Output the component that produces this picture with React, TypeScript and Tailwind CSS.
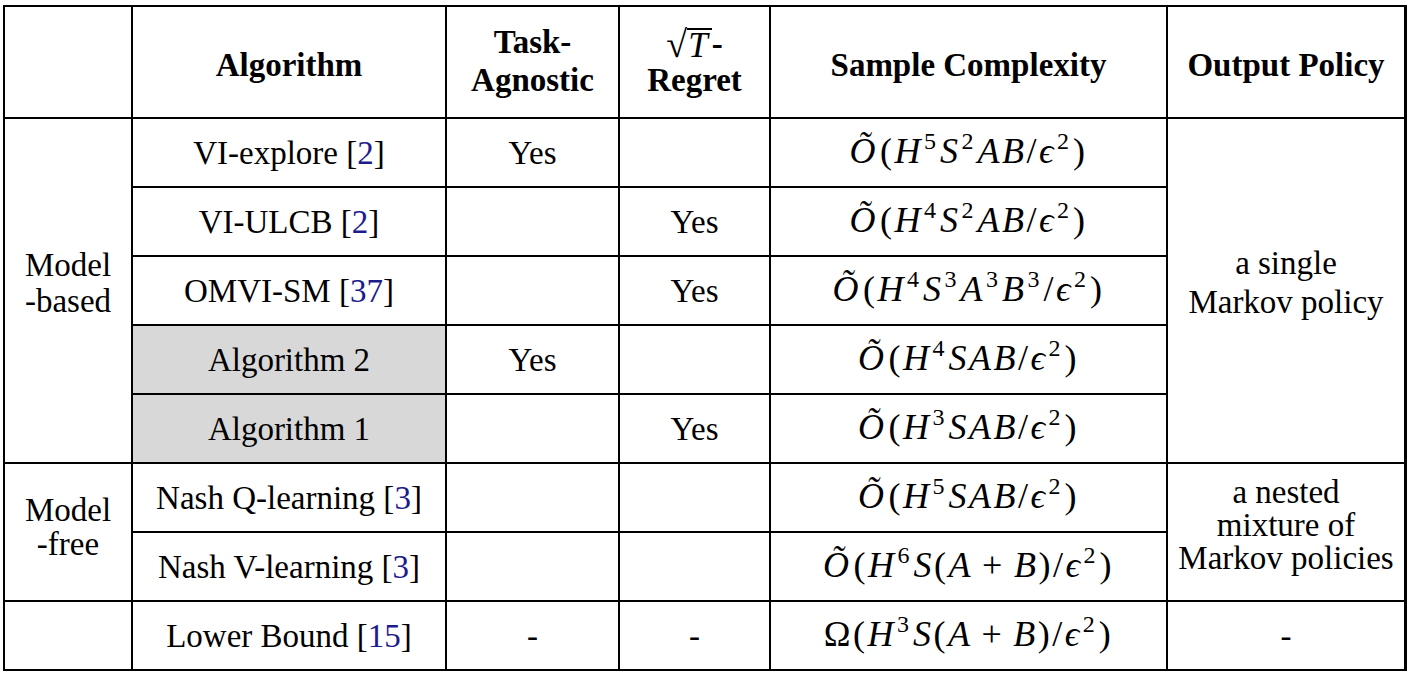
import React from "react";

const Cite = ({ n }: { n: string }) => <span className="text-[#1c1c8c]">{n}</span>;

const Sup = ({ c }: { c: string }) => (
  <span className="relative top-[-14px] text-[24px] not-italic tracking-normal ml-[1px] mr-[4px]">{c}</span>
);

const OT = () => <span className="italic mr-[2px]">Õ</span>;
const I = ({ c }: { c: string }) => <span className="italic">{c}</span>;
const Eps = () => <span className="italic">ϵ</span>;
const Plus = () => <span className="mx-[9px]">+</span>;

const Math = ({ children }: { children: React.ReactNode }) => (
  <span className="text-[36px] tracking-[2.5px] whitespace-nowrap">{children}</span>
);

const base = "flex items-center justify-center text-center";
const cell = `bg-white ${base}`;
const gray = `bg-[#d8d8d8] ${base}`;

export default function App() {
  return (
    <div className="w-[1411px] h-[674px] bg-white pl-[3px] pt-[5px] font-['Liberation_Serif',serif] text-[33px] text-black leading-[36px]">
      <div className="grid w-[1404px] bg-black p-[2px] gap-[2px] grid-cols-[126px_312px_171px_149px_395px_236px] grid-rows-[110px_repeat(8,67px)]">
        {/* header */}
        <div className={cell}></div>
        <div className={`${cell} font-bold pt-[6px]`}>Algorithm</div>
        <div className={`${cell} flex-col font-bold leading-[38px] pb-[2px]`}>
          <div>Task-</div>
          <div>Agnostic</div>
        </div>
        <div className={`${cell} flex-col font-bold leading-[38px] pb-[2px]`}>
          <div className="flex items-end h-[38px]">
            <span className="font-normal text-[38px] leading-[36px] translate-y-[1px]">√</span>
            <span className="border-t-[2px] border-black leading-[31px] text-[35px] font-normal italic pr-[4px] pl-[1px]">T</span>
            <span className="leading-[34px]">-</span>
          </div>
          <div>Regret</div>
        </div>
        <div className={`${cell} font-bold pt-[6px]`}>Sample Complexity</div>
        <div className={`${cell} font-bold pt-[6px]`}>Output Policy</div>

        {/* Model-based group */}
        <div className={`${cell} flex-col row-span-5 leading-[36px] pb-[16px]`}>
          <div>Model</div>
          <div>-based</div>
        </div>
        <div className={cell}>
          VI-explore [<Cite n="2" />]
        </div>
        <div className={cell}>Yes</div>
        <div className={cell}></div>
        <div className={cell}>
          <Math>
            <OT />(<I c="H" />
            <Sup c="5" />
            <I c="S" />
            <Sup c="2" />
            <I c="AB" />/<Eps />
            <Sup c="2" />)
          </Math>
        </div>
        <div className={`${cell} flex-col row-span-5 leading-[39px] pb-[16px]`}>
          <div>a single</div>
          <div>Markov policy</div>
        </div>

        <div className={cell}>
          VI-ULCB [<Cite n="2" />]
        </div>
        <div className={cell}></div>
        <div className={cell}>Yes</div>
        <div className={cell}>
          <Math>
            <OT />(<I c="H" />
            <Sup c="4" />
            <I c="S" />
            <Sup c="2" />
            <I c="AB" />/<Eps />
            <Sup c="2" />)
          </Math>
        </div>

        <div className={cell}>
          OMVI-SM [<Cite n="37" />]
        </div>
        <div className={cell}></div>
        <div className={cell}>Yes</div>
        <div className={cell}>
          <Math>
            <OT />(<I c="H" />
            <Sup c="4" />
            <I c="S" />
            <Sup c="3" />
            <I c="A" />
            <Sup c="3" />
            <I c="B" />
            <Sup c="3" />/<Eps />
            <Sup c="2" />)
          </Math>
        </div>

        <div className={gray}>Algorithm 2</div>
        <div className={cell}>Yes</div>
        <div className={cell}></div>
        <div className={cell}>
          <Math>
            <OT />(<I c="H" />
            <Sup c="4" />
            <I c="SAB" />/<Eps />
            <Sup c="2" />)
          </Math>
        </div>

        <div className={gray}>Algorithm 1</div>
        <div className={cell}></div>
        <div className={cell}>Yes</div>
        <div className={cell}>
          <Math>
            <OT />(<I c="H" />
            <Sup c="3" />
            <I c="SAB" />/<Eps />
            <Sup c="2" />)
          </Math>
        </div>

        {/* Model-free group */}
        <div className={`${cell} flex-col row-span-2 leading-[34px] pb-[10px]`}>
          <div>Model</div>
          <div>-free</div>
        </div>
        <div className={cell}>
          Nash Q-learning [<Cite n="3" />]
        </div>
        <div className={cell}></div>
        <div className={cell}></div>
        <div className={cell}>
          <Math>
            <OT />(<I c="H" />
            <Sup c="5" />
            <I c="SAB" />/<Eps />
            <Sup c="2" />)
          </Math>
        </div>
        <div className={`${cell} flex-col row-span-2 leading-[33px] pb-[14px] whitespace-nowrap`}>
          <div>a nested</div>
          <div>mixture of</div>
          <div>Markov policies</div>
        </div>

        <div className={cell}>
          Nash V-learning [<Cite n="3" />]
        </div>
        <div className={cell}></div>
        <div className={cell}></div>
        <div className={cell}>
          <Math>
            <OT />(<I c="H" />
            <Sup c="6" />
            <I c="S" />(<I c="A" />
            <Plus />
            <I c="B" />)/<Eps />
            <Sup c="2" />)
          </Math>
        </div>

        {/* Lower bound */}
        <div className={cell}></div>
        <div className={cell}>
          Lower Bound [<Cite n="15" />]
        </div>
        <div className={cell}>-</div>
        <div className={cell}>-</div>
        <div className={cell}>
          <Math>
            Ω(<I c="H" />
            <Sup c="3" />
            <I c="S" />(<I c="A" />
            <Plus />
            <I c="B" />)/<Eps />
            <Sup c="2" />)
          </Math>
        </div>
        <div className={cell}>-</div>
      </div>
    </div>
  );
}
